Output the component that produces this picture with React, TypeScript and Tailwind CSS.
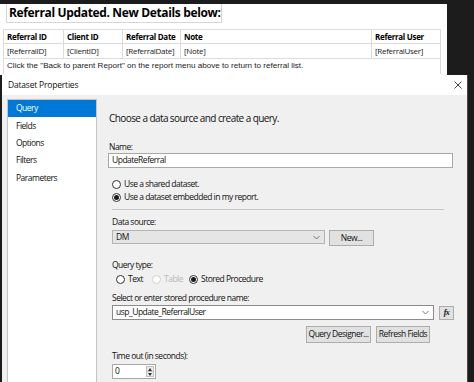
import React from "react";

function Radio({ checked, disabled, label }: { checked?: boolean; disabled?: boolean; label: string }) {
  return (
    <div className="flex items-center gap-[3px]">
      <span
        className={`flex h-[9px] w-[9px] shrink-0 items-center justify-center rounded-full border bg-white ${
          disabled ? "border-[#d0d0d0]" : "border-[#333333]"
        }`}
      >
        {checked && <span className="h-[5px] w-[5px] rounded-full bg-[#1a1a1a]" />}
      </span>
      <span className={disabled ? "text-[#b8b8b8]" : "text-[#111111]"}>{label}</span>
    </div>
  );
}

function Chevron() {
  return (
    <svg width="7" height="5" viewBox="0 0 7 5" className="shrink-0">
      <path d="M0.5 1 L3.5 4 L6.5 1" fill="none" stroke="#6a6a6a" strokeWidth="0.9" />
    </svg>
  );
}

function Button({ children, width }: { children: React.ReactNode; width: string }) {
  return (
    <div
      className={`flex h-[17px] items-center justify-center border border-[#adadad] bg-[#e1e1e1] text-[#111111] ${width}`}
    >
      {children}
    </div>
  );
}

const navItems = ["Query", "Fields", "Options", "Filters", "Parameters"];

export default function App() {
  return (
    <div className="h-[382px] w-[474px] overflow-hidden bg-[#1c1c1c] font-['Open_Sans',sans-serif] text-[8.5px] tracking-[-0.5px]">
      {/* report page behind the dialog */}
      <div className="mt-[4px] h-[71px] w-[447px] bg-white tracking-[-0.3px]">
        <div className="ml-[6px] flex h-[19px] w-[216px] items-center border-x border-b border-[#d6d6d6] pl-[2px] text-[12px] font-bold tracking-[-0.35px] text-black">
          Referral Updated. New Details below:
        </div>
        <div className="ml-[3px] mt-[6px] w-[438px] border-t border-[#dcdcdc] text-[8px] text-black">
          <div className="flex h-[14px] border-b border-[#dcdcdc] font-bold">
            <div className="flex w-[61px] items-center border-x border-[#dcdcdc] pl-[3px]">Referral ID</div>
            <div className="flex w-[59px] items-center border-r border-[#dcdcdc] pl-[3px]">Client ID</div>
            <div className="flex w-[58px] items-center border-r border-[#dcdcdc] pl-[3px]">Referral Date</div>
            <div className="flex w-[191px] items-center border-r border-[#dcdcdc] pl-[3px]">Note</div>
            <div className="flex w-[69px] items-center border-r border-[#dcdcdc] pl-[3px]">Referral User</div>
          </div>
          <div className="flex h-[15px] border-b border-[#dcdcdc] text-[#222222]">
            <div className="flex w-[61px] items-center border-x border-[#dcdcdc] pl-[3px]">[ReferralID]</div>
            <div className="flex w-[59px] items-center border-r border-[#dcdcdc] pl-[3px]">[ClientID]</div>
            <div className="flex w-[58px] items-center border-r border-[#dcdcdc] pl-[3px]">[ReferralDate]</div>
            <div className="flex w-[191px] items-center border-r border-[#dcdcdc] pl-[3px]">[Note]</div>
            <div className="flex w-[69px] items-center border-r border-[#dcdcdc] pl-[3px]">[ReferralUser]</div>
          </div>
          <div className="flex h-[15px] items-center border-x border-[#dcdcdc] pl-[3px] font-['Liberation_Sans',sans-serif] text-[8.1px] tracking-normal text-[#222222]">
            Click the "Back to parent Report" on the report menu above to return to referral list.
          </div>
        </div>
      </div>

      {/* Dataset Properties dialog */}
      <div className="ml-[2px] w-[466px] border-r border-[#4a4a4a] bg-[#f0f0f0]">
        <div className="flex h-[20px] items-center justify-between bg-white pl-[6px] pr-[5px] tracking-[-0.2px] text-[#111111]">
          <span>Dataset Properties</span>
          <svg width="8" height="8" viewBox="0 0 8 8">
            <path d="M0.5 0.5 L7.5 7.5 M7.5 0.5 L0.5 7.5" stroke="#333333" strokeWidth="0.9" />
          </svg>
        </div>

        <div className="flex h-[287px]">
          <div className="ml-[5px] mt-[4px] w-[90px] border border-b-0 border-[#c4c4c4] bg-white">
            {navItems.map((item, i) => (
              <div
                key={item}
                className={`flex h-[17.4px] items-center pl-[8px] ${
                  i === 0 ? "bg-[#0078d7] text-white" : "text-[#111111]"
                }`}
              >
                {item}
              </div>
            ))}
          </div>

          <div className="ml-[11px] flex flex-col text-[#111111]">
            <div className="mt-[16px] flex h-[14px] items-center pl-[1px] text-[10px] tracking-[-0.58px]">
              Choose a data source and create a query.
            </div>

            <div className="mt-[16px] flex h-[12px] items-center pl-[1px]">Name:</div>
            <div className="flex h-[15px] w-[345px] items-center border border-[#a8a8a8] bg-white pl-[3px]">
              UpdateReferral
            </div>

            <div className="ml-[4px] flex flex-col">
              <div className="mt-[10px] flex h-[12px] items-center">
                <Radio label="Use a shared dataset." />
              </div>
              <div className="mt-[1px] flex h-[12px] items-center">
                <Radio checked label="Use a dataset embedded in my report." />
              </div>

              <div className="mt-[6px] h-px w-[332px] bg-[#c8c8c8]" />

              <div className="mt-[6px] flex h-[12px] items-center">Data source:</div>
              <div className="mt-[2px] flex items-start gap-[4px]">
                <div className="flex h-[14px] w-[213px] items-center justify-between border border-[#b4b4b4] bg-[#e5e5e5] pl-[3px] pr-[4px]">
                  <span>DM</span>
                  <Chevron />
                </div>
                <div className="flex h-[16px] w-[45px] items-center justify-center border border-[#adadad] bg-[#e1e1e1]">
                  New...
                </div>
              </div>

              <div className="mt-[13px] flex h-[12px] items-center">Query type:</div>
              <div className="ml-[4px] mt-[2px] flex h-[12px] items-center">
                <div className="w-[36px]">
                  <Radio label="Text" />
                </div>
                <div className="w-[37px]">
                  <Radio disabled label="Table" />
                </div>
                <Radio checked label="Stored Procedure" />
              </div>

              <div className="mt-[7px] flex h-[12px] items-center">Select or enter stored procedure name:</div>
              <div className="mt-[1px] flex items-start gap-[5px]">
                <div className="flex h-[15px] w-[322px] items-center justify-between border border-[#8c8c8c] bg-white pl-[3px] pr-[4px]">
                  <span>usp_Update_ReferralUser</span>
                  <Chevron />
                </div>
                <div className="mt-[1px] flex h-[14px] w-[15px] items-center justify-center border border-[#adadad] bg-[#e1e1e1] font-['Liberation_Serif',serif] text-[8px] font-bold italic tracking-[-0.5px]">
                  fx
                </div>
              </div>

              <div className="mt-[6px] flex w-[318px] justify-end gap-[5px]">
                <Button width="w-[65px]">Query Designer...</Button>
                <Button width="w-[54px]">Refresh Fields</Button>
              </div>

              <div className="mt-[7px] flex h-[12px] items-center">Time out (in seconds):</div>
              <div className="mt-[2px] flex h-[15px] w-[44px] items-stretch border border-[#a8a8a8] bg-white">
                <div className="flex flex-1 items-center pl-[2px]">0</div>
                <div className="my-[1px] mr-[1px] flex w-[8px] flex-col border border-[#c0c0c0] bg-[#ececec]">
                  <div className="flex flex-1 items-center justify-center border-b border-[#c0c0c0]">
                    <svg width="4" height="3" viewBox="0 0 4 3">
                      <path d="M0 3 L2 0 L4 3 Z" fill="#333333" />
                    </svg>
                  </div>
                  <div className="flex flex-1 items-center justify-center">
                    <svg width="4" height="3" viewBox="0 0 4 3">
                      <path d="M0 0 L2 3 L4 0 Z" fill="#333333" />
                    </svg>
                  </div>
                </div>
              </div>
            </div>
          </div>
        </div>
      </div>
    </div>
  );
}
